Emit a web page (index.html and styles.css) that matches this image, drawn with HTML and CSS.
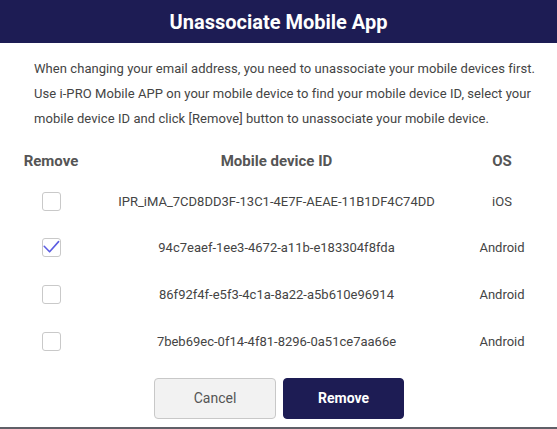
FILE: index.html
```html
<!DOCTYPE html>
<html lang="en">
<head>
<meta charset="utf-8">
<title>Unassociate Mobile App</title>
<link rel="stylesheet" href="styles.css">
</head>
<body>
<div class="dialog">
  <header class="dialog-header">
    <h1 class="dialog-title">Unassociate Mobile App</h1>
  </header>
  <p class="intro">When changing your email address, you need to unassociate your mobile devices first. Use i-PRO Mobile APP on your mobile device to find your mobile device ID, select your mobile device ID and click [Remove] button to unassociate your mobile device.</p>
  <div class="table">
    <div class="row head">
      <div class="cell">Remove</div>
      <div class="cell">Mobile device ID</div>
      <div class="cell">OS</div>
    </div>
    <div class="row">
      <div class="cell"><span class="box"></span></div>
      <div class="cell">IPR_iMA_7CD8DD3F-13C1-4E7F-AEAE-11B1DF4C74DD</div>
      <div class="cell">iOS</div>
    </div>
    <div class="row">
      <div class="cell"><span class="box checked"><svg viewBox="0 0 19 19" width="19" height="19"><path d="M2.2 8.3 L7.6 13.8 L16.6 3.6" fill="none" stroke="#5b5ce2" stroke-width="1.6" stroke-linecap="round" stroke-linejoin="round"/></svg></span></div>
      <div class="cell">94c7eaef-1ee3-4672-a11b-e183304f8fda</div>
      <div class="cell">Android</div>
    </div>
    <div class="row">
      <div class="cell"><span class="box"></span></div>
      <div class="cell">86f92f4f-e5f3-4c1a-8a22-a5b610e96914</div>
      <div class="cell">Android</div>
    </div>
    <div class="row">
      <div class="cell"><span class="box"></span></div>
      <div class="cell">7beb69ec-0f14-4f81-8296-0a51ce7aa66e</div>
      <div class="cell">Android</div>
    </div>
  </div>
  <div class="actions">
    <button class="btn btn-cancel">Cancel</button>
    <button class="btn btn-remove">Remove</button>
  </div>
</div>
</body>
</html>
```
FILE: styles.css
```css
html, body {
  margin: 0;
  padding: 0;
}
body {
  background: #606068;
  width: 557px;
  height: 429px;
  overflow: hidden;
  font-family: Roboto, "Liberation Sans", sans-serif;
}
.dialog {
  width: 557px;
  height: 427px;
  background: #ffffff;
  display: flex;
  flex-direction: column;
}
.dialog-header {
  height: 43px;
  background: #1d1c54;
  display: flex;
  align-items: center;
  justify-content: center;
}
.dialog-title {
  margin: 0;
  color: #ffffff;
  font-size: 20px;
  font-weight: 700;
  line-height: 24px;
}
.intro {
  margin: 13px 0 0 34px;
  width: 505px;
  font-size: 13px;
  line-height: 25px;
  letter-spacing: 0.06px;
  color: #444444;
}
.table {
  margin: 12px 21px 0 17px;
  display: flex;
  flex-direction: column;
}
.row {
  display: grid;
  grid-template-columns: 68px 1fr 68px;
  align-items: center;
  height: 46.67px;
  font-size: 13px;
  color: #444444;
}
.row.head {
  height: 35px;
  font-size: 15px;
  font-weight: 700;
  color: #555555;
}
.cell {
  text-align: center;
  display: flex;
  justify-content: center;
  align-items: center;
}
.box {
  width: 17px;
  height: 17px;
  border: 1px solid #c9c9c9;
  border-radius: 3px;
  background: #fff;
  position: relative;
  display: block;
}
.box svg {
  position: absolute;
  left: -1px;
  top: -1px;
}
.actions {
  margin-top: 13px;
  display: flex;
  justify-content: center;
  gap: 7px;
  padding-left: 1px;
}
.btn {
  height: 41px;
  border-radius: 4px;
  font-family: Roboto, "Liberation Sans", sans-serif;
  font-size: 14px;
  cursor: pointer;
}
.btn-cancel {
  width: 122px;
  background: #f2f2f2;
  border: 1px solid #c8c8c8;
  color: #555555;
}
.btn-remove {
  width: 121px;
  background: #1d1c54;
  border: 1px solid #1d1c54;
  color: #ffffff;
  font-weight: 700;
}
```
